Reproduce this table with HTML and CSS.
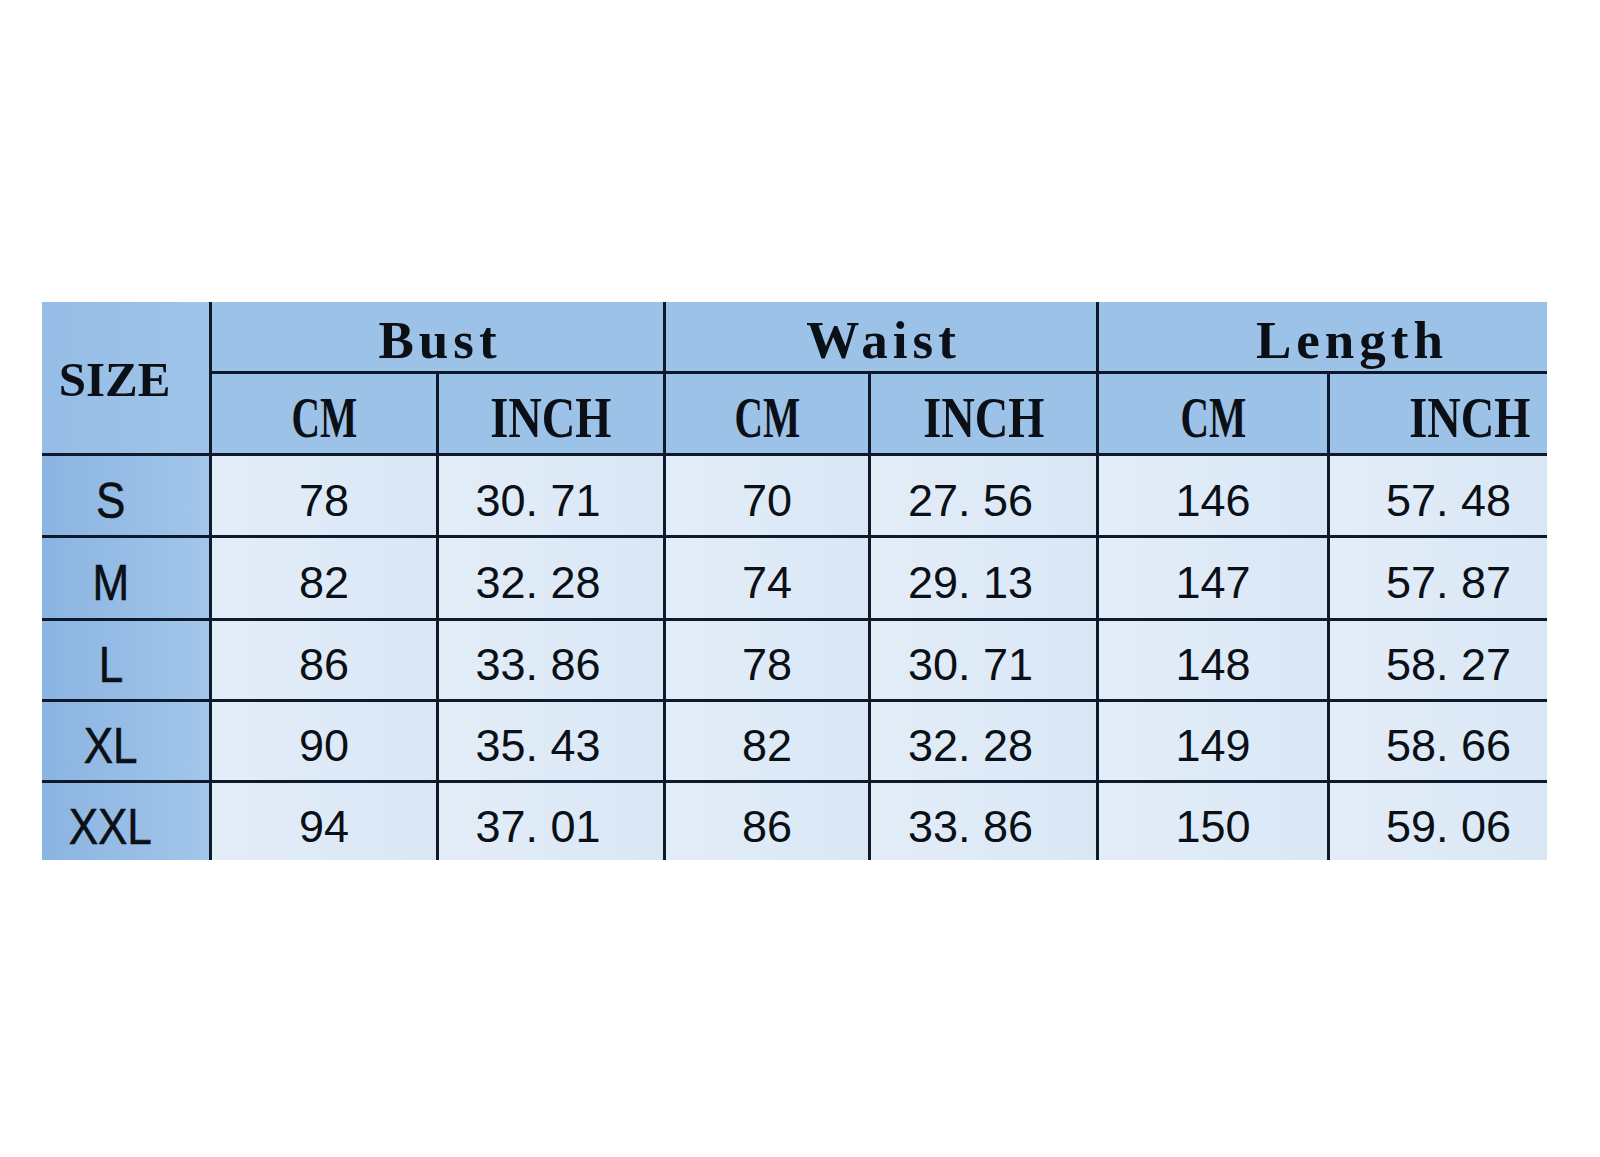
FILE: index.html
```html
<!DOCTYPE html>
<html lang="en">
<head>
<meta charset="utf-8">
<title>Size Chart</title>
<link rel="stylesheet" href="styles.css">
</head>
<body>
<main class="page">
  <div class="chart">
    <div class="cell head size-head">SIZE</div>
    <div class="cell head group">Bust</div>
    <div class="cell head group">Waist</div>
    <div class="cell head group group-shift">Length</div>

    <div class="cell head unit"><span class="unit-text cm">CM</span></div>
    <div class="cell head unit"><span class="unit-text inch">INCH</span></div>
    <div class="cell head unit"><span class="unit-text cm">CM</span></div>
    <div class="cell head unit"><span class="unit-text inch">INCH</span></div>
    <div class="cell head unit"><span class="unit-text cm">CM</span></div>
    <div class="cell head unit unit-shift"><span class="unit-text inch">INCH</span></div>

    <div class="cell label"><span class="label-text">S</span></div>
    <div class="cell data">78</div>
    <div class="cell data data-left">30. 71</div>
    <div class="cell data">70</div>
    <div class="cell data data-left">27. 56</div>
    <div class="cell data">146</div>
    <div class="cell data data-shift">57. 48</div>

    <div class="cell label"><span class="label-text">M</span></div>
    <div class="cell data">82</div>
    <div class="cell data data-left">32. 28</div>
    <div class="cell data">74</div>
    <div class="cell data data-left">29. 13</div>
    <div class="cell data">147</div>
    <div class="cell data data-shift">57. 87</div>

    <div class="cell label"><span class="label-text">L</span></div>
    <div class="cell data">86</div>
    <div class="cell data data-left">33. 86</div>
    <div class="cell data">78</div>
    <div class="cell data data-left">30. 71</div>
    <div class="cell data">148</div>
    <div class="cell data data-shift">58. 27</div>

    <div class="cell label"><span class="label-text">XL</span></div>
    <div class="cell data">90</div>
    <div class="cell data data-left">35. 43</div>
    <div class="cell data">82</div>
    <div class="cell data data-left">32. 28</div>
    <div class="cell data">149</div>
    <div class="cell data data-shift">58. 66</div>

    <div class="cell label"><span class="label-text">XXL</span></div>
    <div class="cell data">94</div>
    <div class="cell data data-left">37. 01</div>
    <div class="cell data">86</div>
    <div class="cell data data-left">33. 86</div>
    <div class="cell data">150</div>
    <div class="cell data data-shift">59. 06</div>
  </div>
</main>
</body>
</html>
```

FILE: styles.css
```css
html, body {
  margin: 0;
  padding: 0;
  background: #ffffff;
}

.page {
  width: 1600px;
  height: 1157px;
  padding: 302px 0 0 42px;
  box-sizing: border-box;
}

.chart {
  display: grid;
  width: 1505px;
  grid-template-columns: 167px 224px 224px 202px 225px 228px 217px;
  grid-template-rows: 69px 79px 79px 80px 78px 78px 77px;
  gap: 3px;
  background: #0e1a2c;
}

.cell {
  display: flex;
  align-items: center;
  justify-content: center;
  box-sizing: border-box;
  color: #0b0f16;
}

.head {
  background: #9dc2e7;
  font-family: "Liberation Serif", "Times New Roman", serif;
  font-weight: bold;
}

.size-head {
  grid-row: span 2;
  font-size: 49px;
  padding-top: 4px;
  padding-right: 22px;
  background: linear-gradient(90deg, #96bde6 0%, #a0c4e9 100%);
}

.size-head::before {
  content: "";
}

.group {
  grid-column: span 2;
  font-size: 53px;
  letter-spacing: 5px;
  padding-left: 5px;
  padding-top: 6px;
}

.group-shift {
  padding-left: 58px;
}

.unit {
  font-size: 58px;
  padding-top: 8px;
}

.unit-text {
  display: inline-block;
}

.unit-text.cm {
  transform: scaleX(0.68);
}

.unit-text.inch {
  transform: scaleX(0.8);
}

.unit-shift {
  padding-left: 62px;
}

.label {
  background: linear-gradient(90deg, #8ab4e1 0%, #a3c6ea 100%);
  font-family: "Liberation Sans", Arial, sans-serif;
  font-size: 50px;
  padding-right: 30px;
  padding-top: 10px;
  -webkit-text-stroke: 0.6px #0b0f16;
}

.label-text {
  display: inline-block;
  transform: scaleX(0.88);
}

.data {
  background: linear-gradient(90deg, #e3edf8 0%, #d9e7f5 100%);
  font-family: "Liberation Sans", Arial, sans-serif;
  font-size: 45px;
  padding-top: 10px;
}

.data-left {
  padding-right: 26px;
}

.data-shift {
  padding-left: 20px;
}
```
